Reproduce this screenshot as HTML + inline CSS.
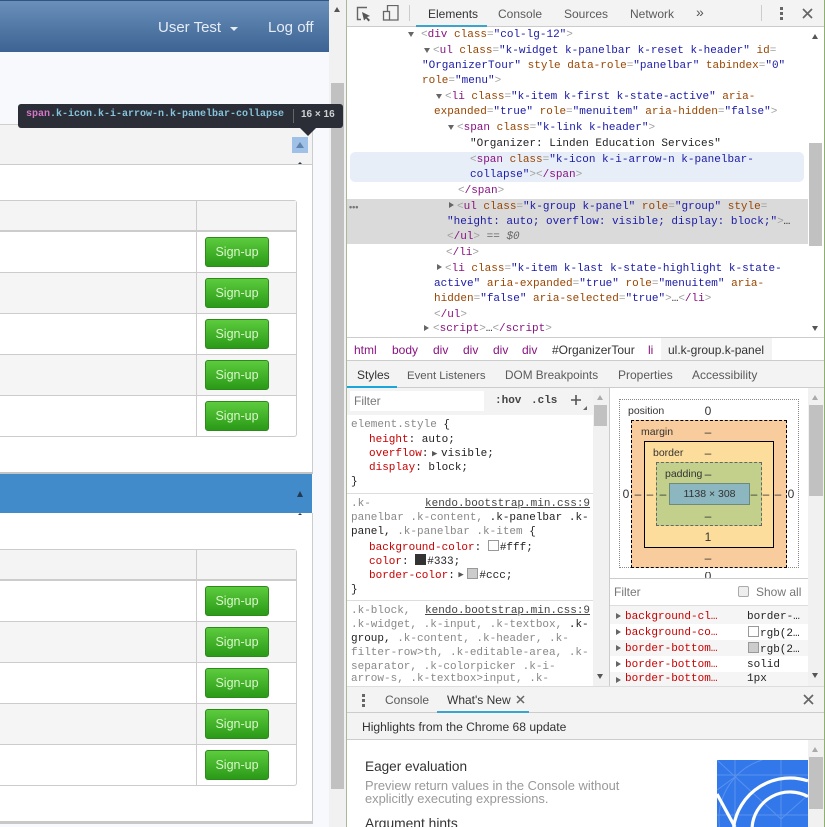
<!DOCTYPE html>
<html><head><meta charset="utf-8"><title>DevTools</title>
<style>
html,body{margin:0;padding:0;width:825px;height:827px;overflow:hidden;background:#fff;font-family:"Liberation Sans",sans-serif}
div,span.a{box-sizing:border-box}
.a{position:absolute;display:block}
.t{position:absolute;white-space:pre;line-height:14px;height:14px}
.m{font-family:"Liberation Mono",monospace;font-size:11px;color:#222;margin-top:1px}
.u{font-size:12px;color:#333}
.g{color:#a0a0a0}.p{color:#881280}.n{color:#994500}.v{color:#1a1aa6}.k{color:#222}
.s{color:#888}.r{color:#c80000}.x{color:#222}
.btn{position:absolute;left:205px;width:64px;height:30px;box-sizing:border-box;border:1px solid #2c8a1a;border-radius:3px;background:linear-gradient(#5ccb3d,#2a9a18);color:#d9f7c9;font-size:12.5px;line-height:29px;text-align:center}
.tri{position:absolute;width:0;height:0;border-left:3.5px solid transparent;border-right:3.5px solid transparent}
.up{border-bottom:5px solid #555}.dn{border-top:5px solid #555}
.rt{position:absolute;width:0;height:0;border-top:3.5px solid transparent;border-bottom:3.5px solid transparent;border-left:5px solid #666}
.dt{position:absolute;width:0;height:0;border-left:3.5px solid transparent;border-right:3.5px solid transparent;border-top:5px solid #666}
.b{position:absolute;font-size:12px;color:#333;line-height:14px;text-align:center;width:14px}
.l{position:absolute;white-space:pre;line-height:14px;height:14px;font-size:10.5px;color:#333}
.sw{display:inline-block;width:9px;height:9px;border:1px solid #999;vertical-align:-1px;margin-right:1px}
.ar{display:inline-block;width:12.6px;text-align:center;vertical-align:top;line-height:14px;font-size:9px;color:#555}
</style></head><body>

<!-- page -->
<div class="a" style="left:0;top:0;width:329px;height:827px;background:#f7f9fd"></div>
<div class="a" style="left:0;top:0;width:329px;height:52px;background:linear-gradient(#6a8fba,#3c6393);border-top:1px solid #2f5680"></div>
<div class="t" style="left:158px;top:21px;font-size:15px;color:#e6edf5">User Test</div>
<div class="tri" style="left:230px;top:27px;border-left-width:4px;border-right-width:4px;border-top:4px solid #e6edf5"></div>
<div class="t" style="left:268px;top:21px;font-size:15px;color:#e6edf5">Log off</div>

<!-- page scrollbar -->
<div class="a" style="left:329px;top:0;width:18px;height:827px;background:#f1f1f1"></div>
<div class="a" style="left:331px;top:83px;width:13px;height:706px;background:#c1c1c1"></div>
<div class="tri up" style="left:334px;top:7px"></div>

<!-- panel -->
<div class="a" style="left:0;top:124px;width:313px;height:41px;background:#f3f3f3;border-top:1px solid #d0d0d0;border-bottom:1px solid #ccc;border-right:1px solid #ccc"></div>
<div class="a" style="left:0;top:165px;width:313px;height:308px;background:#fff;border-right:1px solid #ccc"></div>
<div class="a" style="left:0;top:472px;width:313px;height:2px;background:#c4c4c4"></div>
<div class="a" style="left:0;top:474px;width:312px;height:39px;background:#428bca"></div>
<div class="a" style="left:0;top:513px;width:313px;height:309px;background:#fff;border-right:1px solid #ccc"></div>
<div class="a" style="left:0;top:821px;width:313px;height:3px;background:#c8c8c8"></div>
<div class="tri" style="left:297px;top:491px;border-bottom:6px solid #253a50"></div>
<div class="tri" style="left:298px;top:513px;border-left-width:2px;border-right-width:2px;border-bottom:2px solid #253a50"></div>
<div class="tri" style="left:298px;top:162px;border-left-width:2px;border-right-width:2px;border-bottom:2px solid #253a50"></div>

<!-- table 1 -->
<div class="a" style="left:0;top:200px;width:297px;height:237px;border:1px solid #ccc;border-left:0;border-radius:0 3px 3px 0;background:#fff"></div>
<div class="a" style="left:0;top:201px;width:296px;height:29px;background:#f4f4f4"></div>
<div class="a" style="left:0;top:230px;width:296px;height:2px;background:#ccc"></div>
<div class="a" style="left:0;top:273px;width:296px;height:40px;background:#f5f5f5"></div>
<div class="a" style="left:0;top:355px;width:296px;height:40px;background:#f5f5f5"></div>
<div class="a" style="left:0;top:272px;width:296px;height:1px;background:#ccc"></div>
<div class="a" style="left:0;top:313px;width:296px;height:1px;background:#ccc"></div>
<div class="a" style="left:0;top:354px;width:296px;height:1px;background:#ccc"></div>
<div class="a" style="left:0;top:395px;width:296px;height:1px;background:#ccc"></div>
<div class="a" style="left:196px;top:200px;width:1px;height:236px;background:#ccc"></div>
<div class="btn" style="top:237px">Sign-up</div>
<div class="btn" style="top:278px">Sign-up</div>
<div class="btn" style="top:319px">Sign-up</div>
<div class="btn" style="top:360px">Sign-up</div>
<div class="btn" style="top:401px">Sign-up</div>

<!-- table 2 -->
<div class="a" style="left:0;top:549px;width:297px;height:237px;border:1px solid #ccc;border-left:0;border-radius:0 3px 3px 0;background:#fff"></div>
<div class="a" style="left:0;top:550px;width:296px;height:29px;background:#f4f4f4"></div>
<div class="a" style="left:0;top:579px;width:296px;height:2px;background:#ccc"></div>
<div class="a" style="left:0;top:622px;width:296px;height:40px;background:#f5f5f5"></div>
<div class="a" style="left:0;top:704px;width:296px;height:40px;background:#f5f5f5"></div>
<div class="a" style="left:0;top:621px;width:296px;height:1px;background:#ccc"></div>
<div class="a" style="left:0;top:662px;width:296px;height:1px;background:#ccc"></div>
<div class="a" style="left:0;top:703px;width:296px;height:1px;background:#ccc"></div>
<div class="a" style="left:0;top:744px;width:296px;height:1px;background:#ccc"></div>
<div class="a" style="left:196px;top:549px;width:1px;height:236px;background:#ccc"></div>
<div class="btn" style="top:586px">Sign-up</div>
<div class="btn" style="top:627px">Sign-up</div>
<div class="btn" style="top:668px">Sign-up</div>
<div class="btn" style="top:709px">Sign-up</div>
<div class="btn" style="top:750px">Sign-up</div>

<!-- highlighted icon + tooltip -->
<div class="a" style="left:292px;top:137px;width:16px;height:16px;background:#9fc1e8"></div>
<div class="tri" style="left:296px;top:142px;border-left-width:4px;border-right-width:4px;border-bottom:6px solid #5f83aa"></div>
<div class="a" style="left:18px;top:104px;width:325px;height:24px;background:#2b2e36;border-radius:3px"></div>
<div class="tri" style="left:300px;top:128px;border-left-width:8px;border-right-width:8px;border-top:8px solid #2b2e36"></div>
<div class="t m" style="left:26px;top:107px;font-size:10px;font-weight:bold;color:#86c3dc"><span style="color:#d675c8">span</span>.k-icon.k-i-arrow-n.k-panelbar-collapse</div>
<div class="a" style="left:293px;top:109px;width:1px;height:14px;background:#666"></div>
<div class="t" style="left:301px;top:108px;font-size:10px;font-weight:bold;color:#cfd1d4">16 × 16</div>

<!-- devtools base -->
<div class="a" style="left:346px;top:0;width:1px;height:827px;background:#a9b79a"></div>
<div class="a" style="left:347px;top:0;width:477px;height:827px;background:#fff"></div>
<div class="a" style="left:824px;top:0;width:1px;height:827px;background:#8fae72"></div>

<!-- top toolbar -->
<div class="a" style="left:347px;top:0;width:477px;height:27px;background:#f3f3f3;border-bottom:1px solid #ccc"></div>
<svg class="a" style="left:355px;top:5px" width="50" height="18" viewBox="0 0 50 18" fill="none">
<path d="M12 2.5H2.5V14.5H6" stroke="#666" stroke-width="1.4"/><path d="M7 7L15 11L12 12L15 15L13.5 16.5L11 13.5L9 15.5Z" fill="#555"/>
<path d="M32.5 6V0.5H43V15H35" stroke="#666" stroke-width="1.3"/><rect x="28.5" y="6.5" width="6" height="8.5" stroke="#666" stroke-width="1.3"/>
</svg>
<div class="a" style="left:409px;top:5px;width:1px;height:16px;background:#ccc"></div>
<div class="t u" style="left:428px;top:7px;color:#333">Elements</div>
<div class="t u" style="left:498px;top:7px;color:#5a5a5a">Console</div>
<div class="t u" style="left:564px;top:7px;color:#5a5a5a">Sources</div>
<div class="t u" style="left:630px;top:7px;color:#5a5a5a">Network</div>
<div class="t" style="left:696px;top:5px;font-size:14px;color:#555">»</div>
<div class="a" style="left:416px;top:25px;width:71px;height:2px;background:#3aa4cc"></div>
<div class="a" style="left:761px;top:5px;width:1px;height:16px;background:#ccc"></div>
<div class="a" style="left:780px;top:7px;width:3px;height:3px;background:#666;box-shadow:0 5px 0 #666,0 10px 0 #666"></div>
<svg class="a" style="left:802px;top:8px" width="11" height="11" viewBox="0 0 11 11"><path d="M1 1L10 10M10 1L1 10" stroke="#666" stroke-width="1.7"/></svg>

<!-- DOM tree -->
<div class="a" style="left:350px;top:152px;width:454px;height:30px;background:#e8eef7;border-radius:5px"></div>
<div class="a" style="left:347px;top:199px;width:461px;height:45px;background:#dadada"></div>
<div class="t" style="left:349px;top:200px;font-size:9px;font-weight:bold;color:#777">•••</div>

<div class="dt" style="left:408px;top:32px"></div>
<div class="t m" style="left:421px;top:27px"><span class="g">&lt;</span><span class="p">div</span> <span class="n">class</span><span class="g">=</span><span class="v">"col-lg-12"</span><span class="g">&gt;</span></div>
<div class="dt" style="left:424px;top:48px"></div>
<div class="t m" style="left:433px;top:43px"><span class="g">&lt;</span><span class="p">ul</span> <span class="n">class</span><span class="g">=</span><span class="v">"k-widget k-panelbar k-reset k-header"</span> <span class="n">id</span><span class="g">=</span></div>
<div class="t m" style="left:422px;top:58px"><span class="v">"OrganizerTour"</span> <span class="n">style</span> <span class="n">data-role</span><span class="g">=</span><span class="v">"panelbar"</span> <span class="n">tabindex</span><span class="g">=</span><span class="v">"0"</span></div>
<div class="t m" style="left:422px;top:73px"><span class="n">role</span><span class="g">=</span><span class="v">"menu"</span><span class="g">&gt;</span></div>
<div class="dt" style="left:436px;top:94px"></div>
<div class="t m" style="left:445px;top:89px"><span class="g">&lt;</span><span class="p">li</span> <span class="n">class</span><span class="g">=</span><span class="v">"k-item k-first k-state-active"</span> <span class="n">aria-</span></div>
<div class="t m" style="left:434px;top:104px"><span class="n">expanded</span><span class="g">=</span><span class="v">"true"</span> <span class="n">role</span><span class="g">=</span><span class="v">"menuitem"</span> <span class="n">aria-hidden</span><span class="g">=</span><span class="v">"false"</span><span class="g">&gt;</span></div>
<div class="dt" style="left:448px;top:125px"></div>
<div class="t m" style="left:457px;top:120px"><span class="g">&lt;</span><span class="p">span</span> <span class="n">class</span><span class="g">=</span><span class="v">"k-link k-header"</span><span class="g">&gt;</span></div>
<div class="t m" style="left:470px;top:136px">"Organizer: Linden Education Services"</div>
<div class="t m" style="left:470px;top:152px"><span class="g">&lt;</span><span class="p">span</span> <span class="n">class</span><span class="g">=</span><span class="v">"k-icon k-i-arrow-n k-panelbar-</span></div>
<div class="t m" style="left:470px;top:167px"><span class="v">collapse"</span><span class="g">&gt;&lt;</span><span class="p">/span</span><span class="g">&gt;</span></div>
<div class="t m" style="left:458px;top:183px"><span class="g">&lt;</span><span class="p">/span</span><span class="g">&gt;</span></div>
<div class="rt" style="left:449px;top:202px"></div>
<div class="t m" style="left:457px;top:199px"><span class="g">&lt;</span><span class="p">ul</span> <span class="n">class</span><span class="g">=</span><span class="v">"k-group k-panel"</span> <span class="n">role</span><span class="g">=</span><span class="v">"group"</span> <span class="n">style</span><span class="g">=</span></div>
<div class="t m" style="left:447px;top:214px"><span class="v">"height: auto; overflow: visible; display: block;"</span><span class="g">&gt;</span>…</div>
<div class="t m" style="left:447px;top:229px"><span class="g">&lt;</span><span class="p">/ul</span><span class="g">&gt;</span> <span style="color:#666">== <i>$0</i></span></div>
<div class="t m" style="left:446px;top:245px"><span class="g">&lt;</span><span class="p">/li</span><span class="g">&gt;</span></div>
<div class="rt" style="left:437px;top:264px"></div>
<div class="t m" style="left:445px;top:261px"><span class="g">&lt;</span><span class="p">li</span> <span class="n">class</span><span class="g">=</span><span class="v">"k-item k-last k-state-highlight k-state-</span></div>
<div class="t m" style="left:434px;top:276px"><span class="v">active"</span> <span class="n">aria-expanded</span><span class="g">=</span><span class="v">"true"</span> <span class="n">role</span><span class="g">=</span><span class="v">"menuitem"</span> <span class="n">aria-</span></div>
<div class="t m" style="left:434px;top:291px"><span class="n">hidden</span><span class="g">=</span><span class="v">"false"</span> <span class="n">aria-selected</span><span class="g">=</span><span class="v">"true"</span><span class="g">&gt;</span>…<span class="g">&lt;</span><span class="p">/li</span><span class="g">&gt;</span></div>
<div class="t m" style="left:434px;top:307px"><span class="g">&lt;</span><span class="p">/ul</span><span class="g">&gt;</span></div>
<div class="rt" style="left:424px;top:325px"></div>
<div class="t m" style="left:433px;top:321px"><span class="g">&lt;</span><span class="p">script</span><span class="g">&gt;</span>…<span class="g">&lt;</span><span class="p">/script</span><span class="g">&gt;</span></div>
<!-- DOM scrollbar -->
<div class="tri up" style="left:812px;top:34px"></div>
<div class="a" style="left:809px;top:143px;width:13px;height:103px;background:#c1c1c1"></div>
<div class="tri dn" style="left:812px;top:326px"></div>

<!-- breadcrumb -->
<div class="a" style="left:347px;top:337px;width:477px;height:24px;background:#fff;border-top:1px solid #ccc;border-bottom:1px solid #ccc"></div>
<div class="a" style="left:661px;top:338px;width:111px;height:22px;background:#f3f3f3"></div>
<div class="t u" style="left:354px;top:343px;color:#881280">html</div>
<div class="t u" style="left:392px;top:343px;color:#881280">body</div>
<div class="t u" style="left:433px;top:343px;color:#881280">div</div>
<div class="t u" style="left:463px;top:343px;color:#881280">div</div>
<div class="t u" style="left:493px;top:343px;color:#881280">div</div>
<div class="t u" style="left:522px;top:343px;color:#881280">div</div>
<div class="t u" style="left:552px;top:343px;color:#333">#OrganizerTour</div>
<div class="t u" style="left:648px;top:343px;color:#881280">li</div>
<div class="t u" style="left:668px;top:343px;color:#333">ul.k-group.k-panel</div>

<!-- sub tabs -->
<div class="a" style="left:347px;top:361px;width:477px;height:27px;background:#f3f3f3;border-bottom:1px solid #ccc"></div>
<div class="a" style="left:347px;top:386px;width:50px;height:2px;background:#1aa5dc"></div>
<div class="t u" style="left:357px;top:368px;color:#333">Styles</div>
<div class="t u" style="left:407px;top:369px;color:#5a5a5a;font-size:11.4px">Event Listeners</div>
<div class="t u" style="left:505px;top:368px;color:#5a5a5a;font-size:11.8px">DOM Breakpoints</div>
<div class="t u" style="left:618px;top:368px;color:#5a5a5a">Properties</div>
<div class="t u" style="left:692px;top:368px;color:#5a5a5a">Accessibility</div>

<!-- styles pane -->
<div class="a" style="left:347px;top:388px;width:246px;height:27px;background:#f3f3f3"></div>
<div class="a" style="left:350px;top:391px;width:134px;height:20px;background:#fff"></div>
<div class="t u" style="left:354px;top:394px;color:#777">Filter</div>
<div class="t m" style="left:495px;top:393px;font-weight:bold;color:#444">:hov</div>
<div class="t m" style="left:531px;top:393px;font-weight:bold;color:#444">.cls</div>
<svg class="a" style="left:570px;top:394px" width="14" height="14" viewBox="0 0 14 14"><path d="M6 1V11M1 6H11" stroke="#555" stroke-width="1.6"/></svg>
<div class="a" style="left:583px;top:406px;width:0;height:0;border-left:4px solid transparent;border-bottom:4px solid #666"></div>
<div class="a" style="left:593px;top:388px;width:16px;height:298px;background:#f1f1f1"></div>
<div class="tri up" style="left:597px;top:395px;border-bottom-color:#aaa"></div>
<div class="a" style="left:594px;top:405px;width:13px;height:21px;background:#c1c1c1"></div>
<div class="tri dn" style="left:597px;top:674px"></div>
<div class="a" style="left:609px;top:388px;width:1px;height:298px;background:#ccc"></div>

<div class="t m" style="left:351px;top:417px"><span class="s">element.style</span> {</div>
<div class="t m" style="left:369px;top:432px"><span class="r">height</span>: auto;</div>
<div class="t m" style="left:369px;top:446px"><span class="r">overflow</span>:<span class="ar">▶</span>visible;</div>
<div class="t m" style="left:369px;top:460px"><span class="r">display</span>: block;</div>
<div class="t m" style="left:351px;top:474px">}</div>
<div class="a" style="left:347px;top:493px;width:246px;height:1px;background:#ddd"></div>
<div class="t m" style="left:351px;top:496px"><span class="s">.k-</span></div>
<div class="t m" style="left:425px;top:496px;color:#444;text-decoration:underline">kendo.bootstrap.min.css:9</div>
<div class="t m" style="left:351px;top:510px"><span class="s">panelbar .k-content, </span>.k-panelbar .k-</div>
<div class="t m" style="left:351px;top:524px">panel,<span class="s"> .k-panelbar .k-item</span> {</div>
<div class="t m" style="left:369px;top:539px"><span class="r">background-color</span>: <span class="sw" style="background:#fff"></span>#fff;</div>
<div class="t m" style="left:369px;top:553px"><span class="r">color</span>: <span class="sw" style="background:#333;border-color:#333"></span>#333;</div>
<div class="t m" style="left:369px;top:567px"><span class="r">border-color</span>:<span class="ar">▶</span><span class="sw" style="background:#ccc"></span>#ccc;</div>
<div class="t m" style="left:351px;top:582px">}</div>
<div class="a" style="left:347px;top:600px;width:246px;height:1px;background:#ddd"></div>
<div class="t m" style="left:351px;top:603px"><span class="s">.k-block,</span></div>
<div class="t m" style="left:425px;top:603px;color:#444;text-decoration:underline">kendo.bootstrap.min.css:9</div>
<div class="t m" style="left:351px;top:617px"><span class="s">.k-widget, .k-input, .k-textbox, </span>.k-</div>
<div class="t m" style="left:351px;top:631px">group,<span class="s"> .k-content, .k-header, .k-</span></div>
<div class="t m" style="left:351px;top:645px"><span class="s">filter-row&gt;th, .k-editable-area, .k-</span></div>
<div class="t m" style="left:351px;top:659px"><span class="s">separator, .k-colorpicker .k-i-</span></div>
<div class="t m" style="left:351px;top:671px"><span class="s">arrow-s, .k-textbox&gt;input, .k-</span></div>

<!-- box model -->
<div class="a" style="left:619px;top:399px;width:180px;height:169px;border:1px dotted #888"></div>
<div class="a" style="left:631px;top:420px;width:156px;height:148px;background:#f9cc9d;border:1px dashed #000"></div>
<div class="a" style="left:644px;top:441px;width:130px;height:107px;background:#fddd9b;border:1px solid #000"></div>
<div class="a" style="left:656px;top:462px;width:106px;height:64px;background:#c3d08b;border:1px dashed #666"></div>
<div class="a" style="left:669px;top:483px;width:81px;height:22px;background:#8cb6c0;border:1px solid #6e8a7c"></div>
<div class="l" style="left:628px;top:404px">position</div>
<div class="b" style="left:701px;top:404px">0</div>
<div class="l" style="left:641px;top:425px">margin</div>
<div class="b" style="left:701px;top:425px">–</div>
<div class="l" style="left:653px;top:446px">border</div>
<div class="b" style="left:701px;top:446px">–</div>
<div class="l" style="left:665px;top:467px">padding</div>
<div class="b" style="left:701px;top:467px">–</div>
<div class="l" style="left:669px;top:487px;width:81px;text-align:center">1138 × 308</div>
<div class="b" style="left:619px;top:487px">0</div>
<div class="b" style="left:631px;top:487px">–</div>
<div class="b" style="left:643px;top:487px">–</div>
<div class="b" style="left:656px;top:487px">–</div>
<div class="b" style="left:747px;top:487px">–</div>
<div class="b" style="left:759px;top:487px">–</div>
<div class="b" style="left:771px;top:487px">–</div>
<div class="b" style="left:784px;top:487px">0</div>
<div class="b" style="left:701px;top:509px">–</div>
<div class="b" style="left:701px;top:530px">1</div>
<div class="b" style="left:701px;top:551px">–</div>
<div class="a" style="left:701px;top:572px;width:14px;height:6px;overflow:hidden"><div class="b" style="left:0;top:-3px">0</div></div>
<div class="a" style="left:610px;top:578px;width:198px;height:1px;background:#ccc"></div>
<div class="t u" style="left:614px;top:585px;color:#777">Filter</div>
<div class="a" style="left:738px;top:586px;width:11px;height:11px;background:#eee;border:1px solid #aaa;border-radius:2px"></div>
<div class="t u" style="left:756px;top:585px;color:#777">Show all</div>
<div class="a" style="left:610px;top:605px;width:198px;height:1px;background:#ddd"></div>
<div class="a" style="left:610px;top:606px;width:198px;height:18px;background:#f5f5f5"></div>
<div class="a" style="left:610px;top:640px;width:198px;height:16px;background:#f5f5f5"></div>
<div class="a" style="left:610px;top:672px;width:198px;height:14px;background:#f5f5f5"></div>
<div class="rt" style="left:616px;top:613px"></div><div class="t m" style="left:625px;top:609px;color:#c80000">background-cl…</div><div class="t m" style="left:747px;top:609px">border-…</div>
<div class="rt" style="left:616px;top:629px"></div><div class="t m" style="left:625px;top:625px;color:#c80000">background-co…</div><div class="t m" style="left:748px;top:625px"><span class="sw" style="background:#fff"></span>rgb(2…</div>
<div class="rt" style="left:616px;top:645px"></div><div class="t m" style="left:625px;top:641px;color:#c80000">border-bottom…</div><div class="t m" style="left:748px;top:641px"><span class="sw" style="background:#ccc"></span>rgb(2…</div>
<div class="rt" style="left:616px;top:661px"></div><div class="t m" style="left:625px;top:657px;color:#c80000">border-bottom…</div><div class="t m" style="left:747px;top:657px">solid</div>
<div class="rt" style="left:616px;top:677px"></div><div class="t m" style="left:625px;top:671px;color:#c80000">border-bottom…</div><div class="t m" style="left:747px;top:671px">1px</div>
<div class="a" style="left:808px;top:388px;width:16px;height:298px;background:#f1f1f1"></div>
<div class="tri up" style="left:812px;top:395px;border-bottom-color:#aaa"></div>
<div class="a" style="left:809px;top:405px;width:14px;height:91px;background:#c1c1c1"></div>
<div class="tri dn" style="left:812px;top:673px"></div>

<!-- drawer -->
<div class="a" style="left:347px;top:686px;width:477px;height:27px;background:#f3f3f3;border-bottom:1px solid #ccc;border-top:1px solid #ddd"></div>
<div class="a" style="left:362px;top:694px;width:3px;height:3px;background:#666;box-shadow:0 5px 0 #666,0 10px 0 #666"></div>
<div class="t u" style="left:385px;top:693px;color:#5a5a5a">Console</div>
<div class="t u" style="left:447px;top:693px;color:#333">What's New</div>
<svg class="a" style="left:516px;top:695px" width="9" height="9" viewBox="0 0 9 9"><path d="M1 1L8 8M8 1L1 8" stroke="#666" stroke-width="1.5"/></svg>
<div class="a" style="left:437px;top:711px;width:92px;height:2px;background:#3aa4cc"></div>
<svg class="a" style="left:803px;top:694px" width="11" height="11" viewBox="0 0 11 11"><path d="M1 1L10 10M10 1L1 10" stroke="#666" stroke-width="1.7"/></svg>
<div class="a" style="left:347px;top:713px;width:477px;height:27px;background:#f3f3f3;border-bottom:1px solid #ccc"></div>
<div class="t u" style="left:362px;top:720px;color:#333;font-size:12.1px">Highlights from the Chrome 68 update</div>
<div class="t" style="left:365px;top:760px;font-size:13.6px;color:#333">Eager evaluation</div>
<div class="t" style="left:365px;top:779px;font-size:12.9px;color:#999">Preview return values in the Console without</div>
<div class="t" style="left:365px;top:792px;font-size:12.9px;color:#999">explicitly executing expressions.</div>
<div class="a" style="left:365px;top:817px;width:200px;height:10px;overflow:hidden"><div class="t" style="left:0;top:0;height:10px;font-size:13.8px;color:#333">Argument hints</div></div>

<svg class="a" style="left:717px;top:760px" width="91" height="67" viewBox="0 0 91 67">
<rect width="91" height="67" fill="#3278ea"/>
<g stroke="#6a9df0" stroke-width="1" fill="none" opacity=".7">
<path d="M0 15H91M0 55H91M18 0V67M64 0V67M0 0L64 59M18 17L0 30M64 59L91 35"/>
<path d="M2.5 67A62 62 0 0 1 45 0"/>
</g>
<g stroke="#fff" stroke-width="3.2" fill="none">
<path d="M35.1 67A38 38 0 0 1 91 36.5"/>
<path d="M16.6 67A57 57 0 0 1 91 20.9"/>
<path d="M0 34L18 67"/>
</g>
</svg>
<div class="a" style="left:808px;top:740px;width:16px;height:87px;background:#f1f1f1"></div>
<div class="tri up" style="left:812px;top:747px;border-bottom-color:#aaa"></div>
<div class="a" style="left:809px;top:757px;width:14px;height:52px;background:#c1c1c1"></div>
</body></html>
